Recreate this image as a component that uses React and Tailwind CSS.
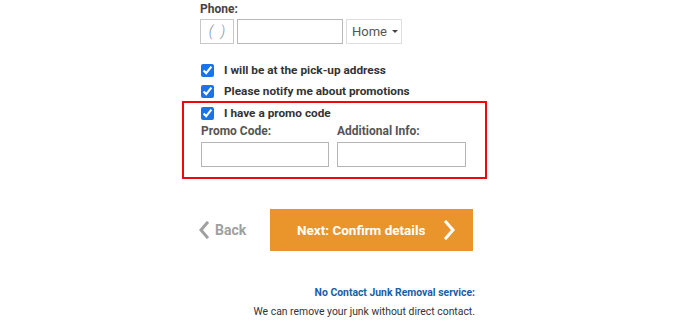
import React from "react";

function Check({ label, inner }) {
  return (
    <label className="flex items-center h-[21px]">
      <input type="checkbox" defaultChecked className={"m-0 w-[13px] h-[13px] accent-[#1a73e8] " + (inner ? "ml-0" : "ml-[1px]")} />
      <span className="ml-[10px] text-[11.8px] font-bold text-[#333]">{label}</span>
    </label>
  );
}

export default function App() {
  return (
    <div className="w-[700px] h-[332px] bg-white overflow-hidden" style={{ fontFamily: "Roboto, 'Liberation Sans', sans-serif" }}>
      <div className="ml-[200px] w-[275px] flex flex-col">
        <div className="text-[12px] font-bold text-[#444] leading-[16px] mt-[1px]">Phone:</div>
        <div className="flex mt-[2px] h-[25px]">
          <div className="w-[34px] border border-[#c8c8c8] flex items-center justify-center text-[15px] italic font-light text-[#8592a6]">(&nbsp;&nbsp;)</div>
          <div className="ml-[3px] w-[106px] border border-[#b8b8b8]"></div>
          <div className="ml-[3px] w-[56px] border border-[#dedede] flex items-center pl-[5px] text-[13px] text-[#555]">
            Home
            <span className="ml-[5px] w-0 h-0 border-l-[3px] border-r-[3px] border-t-[3px] border-l-transparent border-r-transparent border-t-[#444]"></span>
          </div>
        </div>
        <div className="mt-[16px] flex flex-col">
          <Check label="I will be at the pick-up address" />
          <Check label="Please notify me about promotions" />
        </div>
        <div className="-ml-[18px] -mr-[12px] -mt-[1px] border-2 border-[#ee0a0a] pl-[17px] pr-[18px] pt-0 pb-[10px]">
          <Check inner label="I have a promo code" />
          <div className="flex">
            <div className="w-[128px]">
              <div className="text-[12px] font-bold text-[#555] leading-[14px]">Promo Code:</div>
              <div className="mt-[4px] h-[25px] border border-[#b5b5b5]"></div>
            </div>
            <div className="w-[129px] ml-[8px]">
              <div className="text-[12px] font-bold text-[#555] leading-[14px]">Additional Info:</div>
              <div className="mt-[4px] h-[25px] border border-[#b5b5b5]"></div>
            </div>
          </div>
        </div>
        <div className="flex items-center mt-[30px] h-[42px]">
          <div className="flex items-center w-[73px] -ml-[3px]">
            <svg width="12" height="18" viewBox="0 0 12 18" className="ml-[1px]">
              <path d="M9 2 L3 9 L9 16" fill="none" stroke="#a0a0a0" strokeWidth="3" strokeLinecap="square" />
            </svg>
            <span className="ml-[5px] text-[14px] font-bold text-[#a0a0a0]">Back</span>
          </div>
          <div className="w-[203px] h-[42px] bg-[#ea952c] flex items-center pl-[27px]">
            <span className="text-[13.5px] font-bold text-white">Next: Confirm details</span>
            <svg width="12" height="20" viewBox="0 0 12 20" className="ml-[19px]">
              <path d="M2 2 L9 10 L2 18" fill="none" stroke="#fff" strokeWidth="3" strokeLinecap="square" />
            </svg>
          </div>
        </div>
        <div className="mt-[34px] text-right text-[10.4px] font-bold text-[#1a5ea8] leading-[16px]">No Contact Junk Removal service:</div>
        <div className="mt-[3px] text-right text-[10.4px] text-[#333] leading-[16px]">We can remove your junk without direct contact.</div>
      </div>
    </div>
  );
}
